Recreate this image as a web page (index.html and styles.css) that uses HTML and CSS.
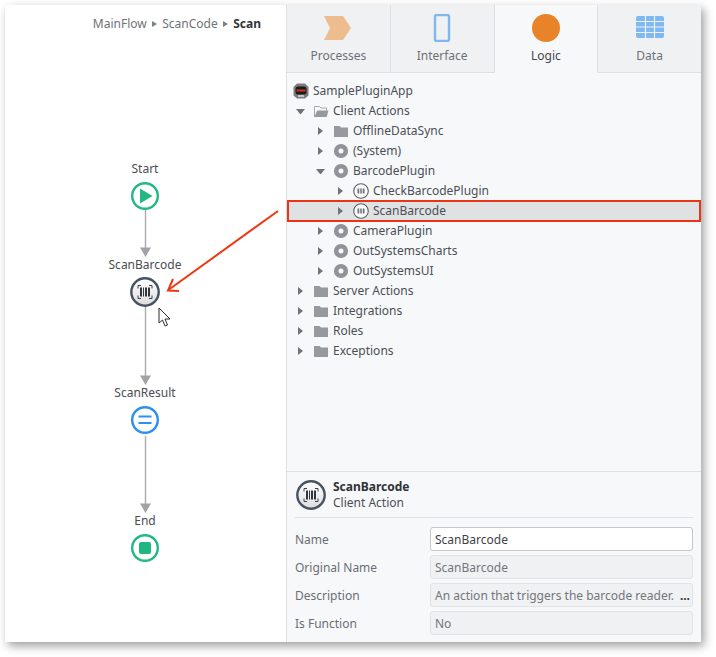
FILE: index.html
```html
<!DOCTYPE html>
<html lang="en">
<head>
<meta charset="utf-8">
<title>ScanBarcode</title>
<link rel="stylesheet" href="styles.css">
</head>
<body>
<svg class="defs" width="0" height="0" aria-hidden="true">
  <defs>
    <linearGradient id="barfill" x1="0" y1="0" x2="0" y2="1">
      <stop offset="0" stop-color="#ffffff"/>
      <stop offset="1" stop-color="#dcdde0"/>
    </linearGradient>
    <symbol id="barcode" viewBox="0 0 30 30">
      <circle cx="15" cy="15" r="13.7" fill="url(#barfill)" stroke="#47535f" stroke-width="2.4"/>
      <path d="M8 11.5V8.5H11M19 8.5H22V11.5M22 18.5V21.5H19M11 21.5H8V18.5" fill="none" stroke="#3b4046" stroke-width="1"/>
      <path d="M10 10.5H12V19.5H10ZM13 10.5H14V19.5H13ZM15 10.5H17V19.5H15ZM18 10.5H20V19.5H18Z" fill="#33373c"/>
    </symbol>
    <symbol id="barcode-small" viewBox="0 0 16 16">
      <circle cx="8" cy="8" r="7.3" fill="#fbfbfc" stroke="#5a6067" stroke-width="1.1"/>
      <path d="M4.6 5.4H5.8V10.6H4.6ZM6.8 5.4H7.6V10.6H6.8ZM8.4 5.4H9.2V10.6H8.4ZM10.2 5.4H11.4V10.6H10.2Z" fill="#4a4f55"/>
    </symbol>
    <symbol id="module" viewBox="0 0 16 16">
      <circle cx="8" cy="8" r="4.800" fill="none" stroke="#909397" stroke-width="4.600"/>
    </symbol>
    <symbol id="folder" viewBox="0 0 16 16">
      <path d="M1 3H6.5L8 4.5H15V14H1Z" fill="#96999d"/>
    </symbol>
    <symbol id="folder-open" viewBox="0 0 16 16">
      <path d="M1.500 14V3.500H6.500L8 5H13.500V7.500" fill="none" stroke="#a4a7aa" stroke-width="1"/>
      <path d="M4.200 7.500H15.500L13.600 14H1.400Z" fill="#96999d"/>
    </symbol>
  </defs>
</svg>

<main class="window">
  <section class="canvas">
    <nav class="crumbs">
      <span>MainFlow</span><i class="crumb-sep"></i><span>ScanCode</span><i class="crumb-sep"></i><b>Scan</b>
    </nav>
    <svg class="edges" width="281" height="637" viewBox="0 0 281 637" aria-hidden="true">
      <path d="M140.500 205V243M140.500 302V371M140.500 431V499" stroke="#a9aaac" stroke-width="1.400" fill="none"/>
      <path d="M135 242.500H146L140.500 252ZM135 370.500H146L140.500 380ZM135 498.500H146L140.500 508Z" fill="#a2a3a6"/>
    </svg>

    <div class="node node-start">
      <span class="node-label">Start</span>
      <svg width="30" height="30" viewBox="0 0 30 30"><circle cx="15" cy="15" r="12.800" fill="#fff" stroke="#23b883" stroke-width="2.400"/><path d="M10 7.500L22.500 15L10 22.500Z" fill="#23b883"/></svg>
    </div>
    <div class="node node-scan">
      <span class="node-label">ScanBarcode</span>
      <svg width="30" height="30"><use href="#barcode"/></svg>
    </div>
    <div class="node node-result">
      <span class="node-label">ScanResult</span>
      <svg width="30" height="30" viewBox="0 0 30 30"><circle cx="15" cy="15" r="12.800" fill="#fff" stroke="#2f8ff0" stroke-width="2.400"/><path d="M8.500 11.500H21.500M8.500 18H21.500" stroke="#2f8ff0" stroke-width="2.200"/></svg>
    </div>
    <div class="node node-end">
      <span class="node-label">End</span>
      <svg width="30" height="30" viewBox="0 0 30 30"><circle cx="15" cy="15" r="12.800" fill="#fff" stroke="#23b883" stroke-width="2.400"/><rect x="9" y="9" width="12" height="12" rx="2" fill="#1fb67f"/></svg>
    </div>

    <svg class="cursor" width="14" height="21" viewBox="0 0 14 21" aria-hidden="true">
      <path d="M1 1V16L4.500 13L7 19L9.500 18L7 12H12Z" fill="#fff" stroke="#2b2d30" stroke-width="1"/>
    </svg>
  </section>

  <section class="panel">
    <div class="tabs">
      <div class="tab">
        <svg width="30" height="28" viewBox="0 0 30 28"><path d="M1 2H20L28 14L20 26H1L7 14Z" fill="#eebd8f"/></svg>
        <span>Processes</span>
      </div>
      <div class="tab">
        <svg width="30" height="28" viewBox="0 0 30 28"><rect x="8" y="1" width="14" height="26" rx="1.500" fill="#f0f1f3" stroke="#7fb8f0" stroke-width="2.400"/></svg>
        <span>Interface</span>
      </div>
      <div class="tab tab-active">
        <svg width="30" height="28" viewBox="0 0 30 28"><circle cx="15" cy="14" r="14" fill="#e9832a"/></svg>
        <span>Logic</span>
      </div>
      <div class="tab">
        <svg width="30" height="28" viewBox="0 0 30 28"><rect x="1" y="2" width="28" height="22" rx="2" fill="#7fb9f2"/><path d="M1 7.500H29M1 13H29M1 18.500H29M10.500 2V24M19.500 2V24" stroke="#f0f1f3" stroke-width="1.200"/></svg>
        <span>Data</span>
      </div>
    </div>

    <div class="tree">
      <div class="row root">
        <svg class="row-icon" width="16" height="16" viewBox="0 0 16 16"><path d="M4 0.500H12L15.500 4V12.500L12 15.500H4L0.500 12.500V4Z" fill="#7a7c7f"/><rect x="2.500" y="3.500" width="11" height="8" rx="2.500" fill="#1e1c1c"/><path d="M3.500 6.500H12.500V8.500H3.500Z" fill="#d9301f"/><rect x="5" y="12" width="6" height="2" fill="#c4c5c7"/></svg>
        <span>SamplePluginApp</span>
      </div>
      <div class="row d1"><i class="caret open"></i><svg class="row-icon" width="16" height="16"><use href="#folder-open"/></svg><span>Client Actions</span></div>
      <div class="row d2"><i class="caret"></i><svg class="row-icon" width="16" height="16"><use href="#folder"/></svg><span>OfflineDataSync</span></div>
      <div class="row d2"><i class="caret"></i><svg class="row-icon" width="16" height="16"><use href="#module"/></svg><span>(System)</span></div>
      <div class="row d2"><i class="caret open"></i><svg class="row-icon" width="16" height="16"><use href="#module"/></svg><span>BarcodePlugin</span></div>
      <div class="row d3"><i class="caret"></i><svg class="row-icon" width="16" height="16"><use href="#barcode-small"/></svg><span>CheckBarcodePlugin</span></div>
      <div class="row d3 selected"><i class="caret"></i><svg class="row-icon" width="16" height="16"><use href="#barcode-small"/></svg><span>ScanBarcode</span><div class="highlight"></div></div>
      <div class="row d2"><i class="caret"></i><svg class="row-icon" width="16" height="16"><use href="#module"/></svg><span>CameraPlugin</span></div>
      <div class="row d2"><i class="caret"></i><svg class="row-icon" width="16" height="16"><use href="#module"/></svg><span>OutSystemsCharts</span></div>
      <div class="row d2"><i class="caret"></i><svg class="row-icon" width="16" height="16"><use href="#module"/></svg><span>OutSystemsUI</span></div>
      <div class="row d1"><i class="caret"></i><svg class="row-icon" width="16" height="16"><use href="#folder"/></svg><span>Server Actions</span></div>
      <div class="row d1"><i class="caret"></i><svg class="row-icon" width="16" height="16"><use href="#folder"/></svg><span>Integrations</span></div>
      <div class="row d1"><i class="caret"></i><svg class="row-icon" width="16" height="16"><use href="#folder"/></svg><span>Roles</span></div>
      <div class="row d1"><i class="caret"></i><svg class="row-icon" width="16" height="16"><use href="#folder"/></svg><span>Exceptions</span></div>
    </div>

    <div class="props">
      <header class="props-head">
        <svg width="30" height="30"><use href="#barcode"/></svg>
        <div class="props-title"><b>ScanBarcode</b><span>Client Action</span></div>
      </header>
      <div class="props-grid">
        <label>Name</label><div class="field field-edit">ScanBarcode</div>
        <label>Original Name</label><div class="field">ScanBarcode</div>
        <label>Description</label><div class="field field-more"><span>An action that triggers the barcode reader.</span><b>...</b></div>
        <label>Is Function</label><div class="field">No</div>
      </div>
    </div>
  </section>

  <svg class="pointer" width="130" height="100" viewBox="0 0 130 100" aria-hidden="true">
    <path d="M115 4L6 82.500" stroke="#ee3712" stroke-width="2" fill="none"/>
    <path d="M10 72L5 83.500L16 84" stroke="#ee3712" stroke-width="2" fill="none"/>
  </svg>
</main>
</body>
</html>
```

FILE: styles.css
```css
* { box-sizing: border-box; }

html, body { margin: 0; padding: 0; background: #fff; }

body {
  width: 716px;
  height: 657px;
  padding: 5px 15px 15px 5px;
  overflow: hidden;
  font: 12px/20px "Noto Sans", "Open Sans", sans-serif;
  color: #4b4f55;
}

.defs { position: absolute; }

.window {
  position: relative;
  display: flex;
  width: 696px;
  height: 637px;
  background: #fff;
  box-shadow: 3px 4px 9px rgba(0, 0, 0, .38);
}

/* Flow canvas */
.canvas {
  position: relative;
  flex: 0 0 282px;
  border-right: 1px solid #dfe0e3;
}

.crumbs {
  display: flex;
  justify-content: flex-end;
  align-items: center;
  height: 38px;
  padding-right: 25px;
  color: #6f7277;
}

.crumbs b { color: #33363a; font-weight: 700; }

.crumb-sep {
  width: 0;
  height: 0;
  margin: 0 5px 0 5.500px;
  border-left: 5px solid #7d8085;
  border-top: 3.5px solid transparent;
  border-bottom: 3.5px solid transparent;
}

.edges { position: absolute; left: 0; top: 0; }

.node {
  position: absolute;
  left: 90px;
  width: 100px;
  display: flex;
  flex-direction: column;
  align-items: center;
  color: #4a4d52;
}

.node-label { height: 20px; line-height: 20px; margin-bottom: 2px; }
.node svg { display: block; }

.node-start  { top: 154px; }
.node-scan   { top: 250px; }
.node-result { top: 378px; }
.node-end    { top: 506px; }

.cursor { position: absolute; left: 153px; top: 302px; }

/* Right panel */
.panel {
  flex: 1;
  display: flex;
  flex-direction: column;
  background: #f7f8fa;
}

.tabs { display: flex; height: 68px; }

.tab {
  flex: 1;
  display: flex;
  flex-direction: column;
  align-items: center;
  padding-top: 9px;
  gap: 4px;
  background: #f0f1f3;
  border-right: 1px solid #dfe0e3;
  border-bottom: 1px solid #dfe0e3;
  color: #6d7177;
}

.tab span { height: 20px; }
.tab svg { display: block; }

.tab-active {
  background: #f7f8fa;
  border-bottom-color: transparent;
  color: #44474c;
}

.tab:last-child { border-right: 0; }

.tree { flex: 1; padding-top: 8px; }

.row {
  position: relative;
  display: flex;
  align-items: center;
  height: 20px;
  white-space: nowrap;
}

.row-icon { flex: 0 0 16px; margin-right: 4px; }

.root { padding-left: 6px; }
.d1 { padding-left: 9px; }
.d2 { padding-left: 29px; }
.d3 { padding-left: 49px; }

.caret {
  flex: 0 0 10px;
  width: 0;
  height: 0;
  border-left: 5px solid #70747a;
  border-top: 4px solid transparent;
  border-bottom: 4px solid transparent;
  border-right: 5px solid transparent;
  margin-left: 2px;
  margin-right: 5px;
}

.caret.open {
  border-left: 4.500px solid transparent;
  border-right: 4.500px solid transparent;
  border-top: 5px solid #70747a;
  border-bottom: 0;
  flex-basis: 9px;
  margin-left: 0;
  margin-right: 8px;
}

.selected { background: #e0e1e3; }

.highlight {
  position: absolute;
  left: 0;
  right: 0;
  top: -1px;
  bottom: -1px;
  border: 2px solid #ea3416;
}

/* Properties */
.props {
  flex: 0 0 171px;
  border-top: 1px solid #dfe0e3;
}

.props-head {
  display: flex;
  align-items: center;
  gap: 7px;
  height: 46px;
  margin: 0 8px 0 8px;
  border-bottom: 1px solid #e0e1e4;
}

.props-head svg { margin-left: 1px; }

.props-title {
  display: flex;
  flex-direction: column;
  line-height: 16px;
}

.props-title b { color: #2f3236; font-weight: 700; }

.props-grid {
  display: grid;
  grid-template-columns: 135px 263px;
  grid-auto-rows: 24px;
  row-gap: 4px;
  padding: 9px 8px 0 8px;
}

.props-grid label { line-height: 26px; color: #6a6e74; }

.field {
  display: flex;
  align-items: center;
  padding: 1px 4px 0;
  border: 1px solid #e2e3e6;
  border-radius: 3px;
  background: #f0f1f3;
  color: #73767c;
  white-space: nowrap;
  overflow: hidden;
}

.field-edit {
  background: #fff;
  border-color: #c4c6ca;
  color: #3f4247;
}

.field-more { justify-content: space-between; padding-right: 2px; }
.field-more b { color: #33363a; }

/* Annotation arrow over the canvas and tree */
.pointer { position: absolute; left: 158px; top: 202px; }
```
